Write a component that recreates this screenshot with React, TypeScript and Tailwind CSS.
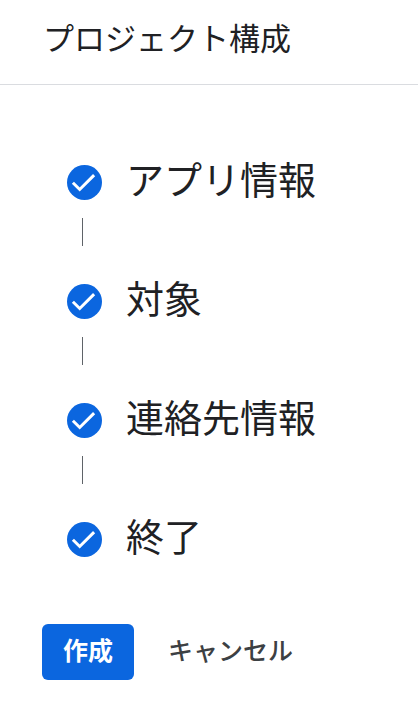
import React from 'react';

interface Step {
  id: number;
  label: string;
}

const steps: Step[] = [
  { id: 1, label: 'アプリ情報' },
  { id: 2, label: '対象' },
  { id: 3, label: '連絡先情報' },
  { id: 4, label: '終了' },
];

const StepCheckIcon = () => (
  <svg className="size-[35px] shrink-0" viewBox="0 0 35 35" aria-hidden="true">
    <circle cx="17.5" cy="17.5" r="17.5" fill="#0b66df" />
    <path d="M5.9 17.7l6.8 6.8L27.1 10.1" fill="none" stroke="#fff" strokeWidth="3" />
  </svg>
);

const App = () => {
  return (
    <main className="min-h-screen bg-white text-[#202124] font-['Noto_Sans_CJK_JP',sans-serif]">
      <header className="border-b border-[#dadce0] px-[43px] pt-[13px] pb-[23px]">
        <h1 className="text-[31px] leading-12">プロジェクト構成</h1>
      </header>

      <ol className="pl-[67px] pt-[66px]">
        {steps.map((step, index) => (
          <li key={step.id}>
            <div className="flex h-[63px] items-center gap-6">
              <StepCheckIcon />
              <h2 className="pb-2.5 text-[38px] leading-14">{step.label}</h2>
            </div>
            {index < steps.length - 1 && (
              <div className="ml-[15px] mt-1 mb-6 h-7 w-px bg-[#5f6368]" />
            )}
          </li>
        ))}
      </ol>

      <div className="flex items-center gap-3 px-[42px] pt-[53px]">
        <button type="button" className="h-14 w-[92px] rounded-md bg-[#0b66df] pb-1 text-[25px] font-bold text-white">
          作成
        </button>
        <button type="button" className="h-14 px-[22px] pb-1 text-[25px] font-medium text-[#3c4043]">
          キャンセル
        </button>
      </div>
    </main>
  );
};

export default App;
